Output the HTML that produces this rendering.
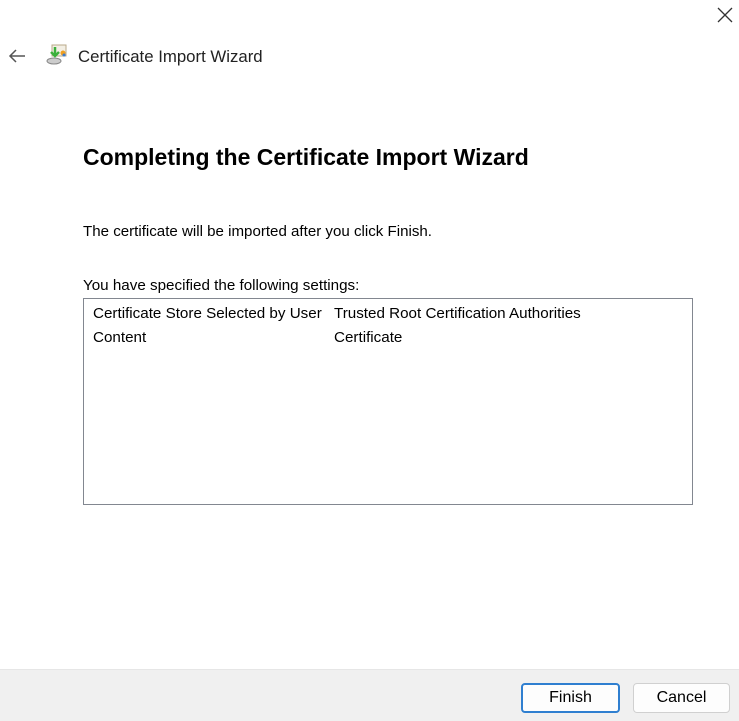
<!DOCTYPE html>
<html><head><style>
body{margin:0;width:739px;height:720px;background:#fff;font-family:"Liberation Sans",sans-serif;color:#000;position:relative;overflow:hidden}
.a{position:absolute;white-space:nowrap}
</style></head><body>
<svg class="a" style="left:716px;top:6px" width="18" height="18" viewBox="0 0 18 18"><path d="M2 2L16 16M16 2L2 16" stroke="#333" stroke-width="1.3"/></svg>
<svg class="a" style="left:8px;top:48px" width="18" height="16" viewBox="0 0 18 16"><path d="M17 8H2M8 2L2 8L8 14" stroke="#555" stroke-width="1.5" fill="none"/></svg>
<svg class="a" style="left:46px;top:44px" width="22" height="22" viewBox="0 0 22 22">
<rect x="6" y="1" width="14" height="11" fill="#f3efe4" stroke="#b9a98a"/>
<circle cx="17" cy="9" r="2.5" fill="#f0a020"/><circle cx="18" cy="11" r="1.5" fill="#3a7ad0"/>
<ellipse cx="8" cy="17" rx="7" ry="3" fill="#ccc" stroke="#888"/>
<path d="M9 3L9 11M5 8L9 12L13 8" stroke="#3bb03b" stroke-width="2.5" fill="none"/>
</svg>
<div class="a" style="left:78px;top:47px;font-size:16.8px;color:#222">Certificate Import Wizard</div>
<div class="a" style="left:83px;top:144px;font-size:23px;font-weight:bold">Completing the Certificate Import Wizard</div>
<div class="a" style="left:83px;top:223px;font-size:15.1px">The certificate will be imported after you click Finish.</div>
<div class="a" style="left:83px;top:277px;font-size:15.2px">You have specified the following settings:</div>
<div class="a" style="left:83px;top:298px;width:610px;height:207px;border:1px solid #828790;box-sizing:border-box"></div>
<div class="a" style="left:93px;top:305px;font-size:15.2px">Certificate Store Selected by User</div>
<div class="a" style="left:334px;top:305px;font-size:15.2px">Trusted Root Certification Authorities</div>
<div class="a" style="left:93px;top:329px;font-size:15.2px">Content</div>
<div class="a" style="left:334px;top:329px;font-size:15.2px">Certificate</div>
<div class="a" style="left:0;top:669px;width:739px;height:51px;background:#f0f0f0;border-top:1px solid #e6e6e6"></div>
<div class="a" style="left:521px;top:683px;width:99px;height:30px;box-sizing:border-box;border:2px solid #2f7fd0;border-radius:4px;background:#fdfdfd;font-size:16px;text-align:center;line-height:26px">Finish</div>
<div class="a" style="left:633px;top:683px;width:97px;height:30px;box-sizing:border-box;border:1px solid #d0d0d0;border-radius:4px;background:#fdfdfd;font-size:16px;text-align:center;line-height:28px">Cancel</div>
</body></html>
